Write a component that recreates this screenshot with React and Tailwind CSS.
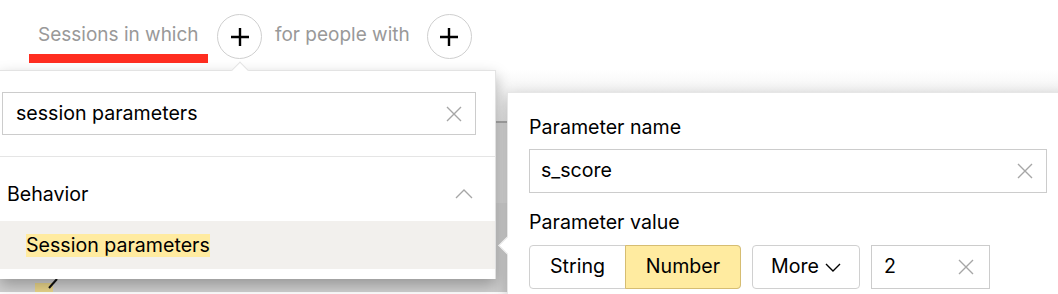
import React from 'react'

const font = { fontFamily: 'Inter, "Liberation Sans", sans-serif' }

function PlusIcon() {
  return (
    <svg width="20" height="20" viewBox="0 0 20 20" className="text-black">
      <path d="M10 1v18M1 10h18" stroke="currentColor" strokeWidth="2.4" />
    </svg>
  )
}

function ClearIcon({ className = '' }) {
  return (
    <svg width="16" height="16" viewBox="0 0 16 16" className={className}>
      <path d="M1 1l14 14M15 1L1 15" stroke="#a6a6a6" strokeWidth="1.4" fill="none" />
    </svg>
  )
}

function RoundPlus() {
  return (
    <button className="w-[45px] h-[45px] rounded-full border border-[#cfcfcf] bg-white flex items-center justify-center shrink-0">
      <PlusIcon />
    </button>
  )
}

function Header() {
  return (
    <div className="h-[70px] bg-white flex items-start pl-[29px] text-[19px] text-[#999]">
      <div className="flex flex-col items-stretch w-[179px] pt-[22px]">
        <span className="leading-[26px] pl-[9px]">Sessions in which</span>
        <span className="mt-[6px] h-[9px] bg-[#ff2d20]" />
      </div>
      <div className="mt-[14px] ml-[9px]">
        <RoundPlus />
      </div>
      <span className="ml-[13px] mt-[22px] leading-[26px]">for people with</span>
      <div className="mt-[14px] ml-[17px]">
        <RoundPlus />
      </div>
    </div>
  )
}

function LeftPopup() {
  return (
    <div className="absolute left-0 top-0 w-[496px] bg-white border-t border-r border-[#e3e3e3] shadow-[0_6px_14px_rgba(0,0,0,0.28)]">
      <span className="absolute left-[234px] -top-[7px] w-[12px] h-[12px] rotate-45 bg-white border-l border-t border-[#e3e3e3]" />
      <div className="pt-[21px] pl-[2px] pr-[19px]">
        <div className="h-[43px] border border-[#cccccc] flex items-center pl-[13px] pr-[13px]">
          <span className="flex-1 text-[19.6px] text-black">session parameters</span>
          <ClearIcon />
        </div>
      </div>
      <div className="mt-[21px] border-t border-[#e5e5e5]" />
      <div className="h-[64px] flex items-start pt-[25px] pl-[7px] pr-[22px]">
        <span className="flex-1 text-[19.6px] leading-[24px] text-black">Behavior</span>
        <svg width="18" height="10" viewBox="0 0 18 10" className="mt-[7px]">
          <path d="M1 9l8-8 8 8" stroke="#a6a6a6" strokeWidth="1.3" fill="none" />
        </svg>
      </div>
      <div className="h-[48px] bg-[#f2f0ed] flex items-center pl-[26px]">
        <span className="bg-[#ffeba0] text-[19.6px] leading-[23px] text-black">Session parameters</span>
      </div>
      <div className="h-[10px]" />
    </div>
  )
}

function RightPopup() {
  return (
    <div className="absolute left-[507px] top-[22px] w-[560px] h-[240px] bg-white border-t border-l border-[#e6e6e6] shadow-[0_4px_14px_rgba(0,0,0,0.22)] pl-[21px] pt-[22px]">
      <span className="absolute -left-[7px] top-[146px] w-[13px] h-[13px] rotate-45 bg-white border-l border-b border-[#e6e6e6]" />
      <div className="text-[19.6px] leading-[24px] text-black">Parameter name</div>
      <div className="mt-[10px] w-[518px] h-[44px] border border-[#cccccc] flex items-center pl-[11px] pr-[13px]">
        <span className="flex-1 text-[19.6px] text-black">s_score</span>
        <ClearIcon />
      </div>
      <div className="mt-[17px] text-[19.6px] leading-[24px] text-black">Parameter value</div>
      <div className="mt-[11px] flex items-center text-[19.6px] text-black">
        <div className="flex h-[44px] rounded-[4px] border border-[#d0d0d0]">
          <button className="w-[95px] flex items-center justify-center">String</button>
          <button className="w-[116px] flex items-center justify-center bg-[#ffeba0] border border-[#d6bd72] -my-px -mr-px rounded-r-[4px]">
            Number
          </button>
        </div>
        <button className="ml-[11px] h-[44px] w-[108px] rounded-[4px] border border-[#d0d0d0] flex items-center justify-center gap-[6px]">
          More
          <svg width="16" height="9" viewBox="0 0 16 9">
            <path d="M1 1l7 7 7-7" stroke="#000" strokeWidth="1.4" fill="none" />
          </svg>
        </button>
        <div className="ml-[11px] h-[44px] w-[119px] border border-[#cccccc] flex items-center pl-[12px] pr-[15px]">
          <span className="flex-1">2</span>
          <ClearIcon />
        </div>
      </div>
    </div>
  )
}

export default function App() {
  return (
    <div className="w-[1058px] h-[294px] overflow-hidden bg-white" style={font}>
      <Header />
      <div className="relative h-[224px]">
        {/* dimmed page below the popups */}
        <div className="h-[53px] bg-gradient-to-b from-white to-[#e6e6e6] border-b-2 border-[#a9a9a9]" />
        <div className="h-[80px] bg-[#d7d7d7]" />
        <div className="h-[89px] bg-[#d0d0d0] pl-[35px] pt-[75px]">
          <svg width="28" height="14" viewBox="0 0 28 14">
            <rect x="0" y="5" width="18" height="9" fill="#e8d48a" />
            <path d="M14 10L22 1" stroke="#111" strokeWidth="2" />
          </svg>
        </div>
        <LeftPopup />
        <RightPopup />
      </div>
    </div>
  )
}
